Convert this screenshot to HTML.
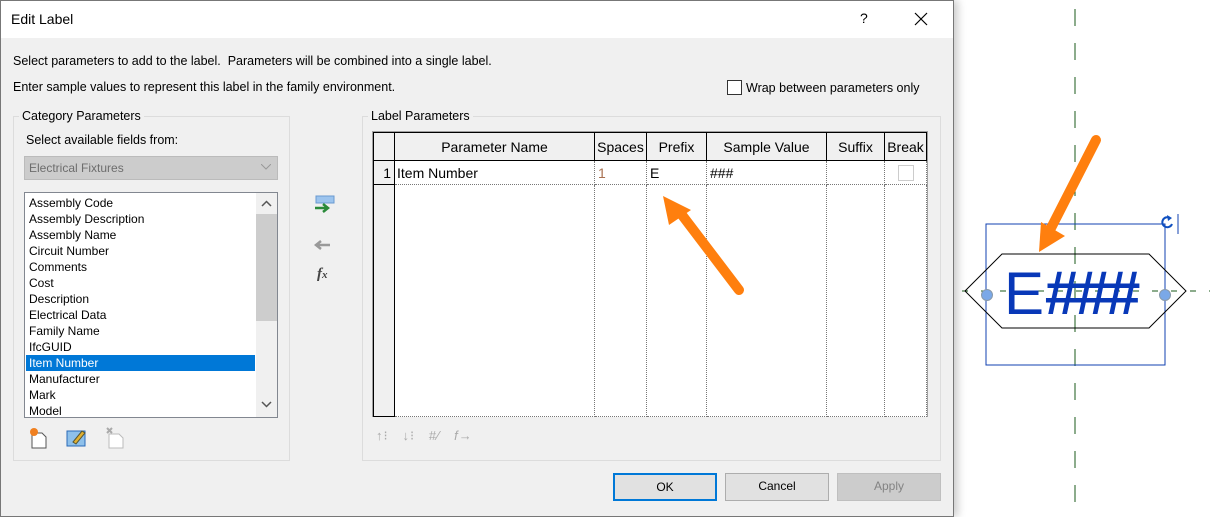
<!DOCTYPE html>
<html><head><style>
*{margin:0;padding:0;box-sizing:border-box}
body{width:1210px;height:517px;background:#fff;position:relative;overflow:hidden;font-family:"Liberation Sans",sans-serif;font-size:12px;color:#000}
.a{position:absolute}
.dlg{left:0;top:0;width:954px;height:517px;background:#f0f0f0;border:1px solid #777;box-shadow:4px 0 8px rgba(0,0,0,.2)}
.title{left:1px;top:1px;width:952px;height:37px;background:#fff}
.grp{border:1px solid #dcdcdc}
.lg{background:#f0f0f0;padding:0 3px}
.li{position:absolute;left:4px;height:16px;line-height:16px;font-size:12px}
.btn{border:1px solid #adadad;background:#e1e1e1;text-align:center;line-height:25px;height:28px;width:104px}
table{border-collapse:collapse}
.h td{border:1px solid #000;text-align:center}
</style></head><body>
<div class="a dlg"></div>
<div class="a title"></div>
<div class="a" style="left:11px;top:11px;font-size:14px">Edit Label</div>
<div class="a" style="left:860px;top:10px;font-size:14px">?</div>
<svg class="a" style="left:914px;top:12px" width="14" height="14"><path d="M1 1L13 13M13 1L1 13" stroke="#000" stroke-width="1.2"/></svg>
<div class="a" style="left:13px;top:54px;font-size:12.5px">Select parameters to add to the label.&nbsp; Parameters will be combined into a single label.</div>
<div class="a" style="left:13px;top:80px;font-size:12.5px">Enter sample values to represent this label in the family environment.</div>
<div class="a" style="left:727px;top:80px;width:15px;height:15px;border:1px solid #333;background:#fff"></div>
<div class="a" style="left:746px;top:81px;font-size:12.5px">Wrap between parameters only</div>

<div class="a grp" style="left:13px;top:116px;width:277px;height:345px"></div>
<div class="a lg" style="left:19px;top:109px;font-size:12.5px">Category Parameters</div>
<div class="a" style="left:26px;top:133px;font-size:12.5px">Select available fields from:</div>
<div class="a" style="left:24px;top:156px;width:254px;height:24px;background:#ccc;border:1px solid #bbb;color:#6d6d6d;line-height:22px;padding-left:4px">Electrical Fixtures</div>
<svg class="a" style="left:261px;top:164px" width="10" height="6"><path d="M0 0L5 5L10 0" fill="none" stroke="#999"/></svg>
<div class="a" style="left:24px;top:192px;width:254px;height:226px;background:#fff;border:1px solid #828790;overflow:hidden">
<div class="li" style="top:2px">Assembly Code</div>
<div class="li" style="top:18px">Assembly Description</div>
<div class="li" style="top:34px">Assembly Name</div>
<div class="li" style="top:50px">Circuit Number</div>
<div class="li" style="top:66px">Comments</div>
<div class="li" style="top:82px">Cost</div>
<div class="li" style="top:98px">Description</div>
<div class="li" style="top:114px">Electrical Data</div>
<div class="li" style="top:130px">Family Name</div>
<div class="li" style="top:146px">IfcGUID</div>
<div class="li" style="top:162px;left:1px;width:229px;background:#0078d7;color:#fff;padding-left:3px">Item Number</div>
<div class="li" style="top:178px">Manufacturer</div>
<div class="li" style="top:194px">Mark</div>
<div class="li" style="top:210px">Model</div>
<div class="a" style="left:231px;top:0;width:21px;height:224px;background:#f0f0f0"></div>
<div class="a" style="left:231px;top:21px;width:21px;height:107px;background:#cdcdcd"></div>
<svg class="a" style="left:236px;top:7px" width="11" height="7"><path d="M1 6L5.5 1.5L10 6" fill="none" stroke="#555" stroke-width="1.5"/></svg>
<svg class="a" style="left:236px;top:208px" width="11" height="7"><path d="M1 1L5.5 5.5L10 1" fill="none" stroke="#555" stroke-width="1.5"/></svg>
</div>
<svg class="a" style="left:28px;top:427px" width="22" height="22"><path d="M4 6h10l4 4v11H4z" fill="#fff" stroke="#555"/><circle cx="6" cy="5" r="4" fill="#f08020"/></svg>
<svg class="a" style="left:66px;top:428px" width="22" height="20"><rect x="1" y="3" width="18" height="15" fill="#8ec0ea" stroke="#2a6ab8"/><path d="M7 14L16 3l3 2-9 11z" fill="#e0b030" stroke="#553"/></svg>
<svg class="a" style="left:104px;top:427px" width="22" height="22"><path d="M5 7h10l4 4v10H5z" fill="#fff" stroke="#bbb"/><path d="M3 1l5 5M8 1L3 6" stroke="#aaa" stroke-width="2"/></svg>

<svg class="a" style="left:314px;top:195px" width="22" height="20"><rect x="2" y="1" width="18" height="7" fill="#9cc4ee" stroke="#6a9ad0"/><path d="M1 13h12M9 9l5 4-5 4" fill="none" stroke="#2a8a3a" stroke-width="2.5"/></svg>
<svg class="a" style="left:314px;top:240px" width="18" height="10"><path d="M16 5H4M7 1L2 5l5 4" fill="none" stroke="#999" stroke-width="2.5"/></svg>
<div class="a" style="left:317px;top:266px;font-family:'Liberation Serif',serif;font-style:italic;font-weight:bold;font-size:15px;color:#444">f<span style="font-size:11px">x</span></div>

<div class="a grp" style="left:362px;top:116px;width:579px;height:345px"></div>
<div class="a lg" style="left:368px;top:109px;font-size:12.5px">Label Parameters</div>
<div class="a" style="left:372px;top:131px;width:556px;height:286px;background:#fff;border:1px solid #a0a0a0"></div>
<table class="a" style="left:373px;top:132px;font-size:14px">
<tr class="h" style="height:28px;background:#f0f0f0">
<td style="width:21px"></td>
<td style="width:200px">Parameter Name</td>
<td style="width:52px">Spaces</td>
<td style="width:60px">Prefix</td>
<td style="width:120px">Sample Value</td>
<td style="width:58px">Suffix</td>
<td style="width:42px">Break</td>
</tr>
<tr style="height:24px;background:#fff">
<td style="border:1px solid #000;background:#f0f0f0;text-align:right;padding-right:3px">1</td>
<td style="border:1px dotted #777;border-top:1px solid #000;padding-left:2px">Item Number</td>
<td style="border:1px dotted #777;border-top:1px solid #000;padding-left:3px;color:#a87050">1</td>
<td style="border:1px dotted #777;border-top:1px solid #000;padding-left:3px">E</td>
<td style="border:1px dotted #777;border-top:1px solid #000;padding-left:3px">###</td>
<td style="border:1px dotted #777;border-top:1px solid #000"></td>
<td style="border:1px dotted #777;border-top:1px solid #000"><div style="margin:0 auto;width:16px;height:16px;border:1px solid #ccc"></div></td>
</tr>
<tr style="height:232px;background:#fff">
<td style="border:1px solid #000;background:#f0f0f0"></td>
<td style="border:1px dotted #777"></td><td style="border:1px dotted #777"></td><td style="border:1px dotted #777"></td><td style="border:1px dotted #777"></td><td style="border:1px dotted #777"></td><td style="border:1px dotted #777"></td>
</tr>
</table>
<div class="a" style="left:376px;top:428px;color:#aaa;font-size:13px;letter-spacing:1px">↑⁝&nbsp;&nbsp;&nbsp;↓⁝&nbsp;&nbsp;&nbsp;#⁄&nbsp;&nbsp;&nbsp;<i>f</i>→</div>

<div class="a btn" style="left:613px;top:473px;border:2px solid #0078d7;line-height:24px">OK</div>
<div class="a btn" style="left:725px;top:473px">Cancel</div>
<div class="a btn" style="left:837px;top:473px;background:#ccc;border-color:#bfbfbf;color:#838383">Apply</div>

<svg class="a" style="left:954px;top:0" width="256" height="517">
<line x1="121" y1="9" x2="121" y2="517" stroke="#1a5a1a" stroke-width="1" stroke-dasharray="17 17"/>
<line x1="8" y1="291" x2="256" y2="291" stroke="#1a5a1a" stroke-width="1" stroke-dasharray="6 13"/>
<rect x="32" y="224" width="179" height="141" fill="none" stroke="#1040b0" stroke-width="1"/>
<path d="M11 291L48 254H195L232 291L195 328H48Z" fill="none" stroke="#000" stroke-width="1"/>
<text x="50" y="314" font-family="Liberation Sans,sans-serif" font-size="60" fill="#0838b8">E</text>
<text x="90" y="314" font-family="Liberation Sans,sans-serif" font-size="62" fill="#0838b8" font-weight="bold" font-style="italic" letter-spacing="-4">###</text>
<circle cx="33" cy="295" r="5.5" fill="#7aa8e8" stroke="#8899aa"/>
<circle cx="211" cy="295" r="5.5" fill="#7aa8e8" stroke="#8899aa"/>
<path d="M216 218a5 5 0 1 0 2 6" fill="none" stroke="#1050c0" stroke-width="2"/><path d="M213 215l5 3-4 3" fill="#1050c0"/>
<line x1="224" y1="214" x2="224" y2="234" stroke="#1040b0"/>
<path d="M142 140L95 232" stroke="#ff7f0e" stroke-width="10" stroke-linecap="round"/>
<path d="M85 252L87 222L111 236Z" fill="#ff7f0e"/>
</svg>
<svg class="a" style="left:655px;top:185px" width="100" height="120">
<path d="M84 105L27 30" stroke="#ff7f0e" stroke-width="10" stroke-linecap="round"/>
<path d="M8 11L36 25L14 40Z" fill="#ff7f0e"/>
</svg>
</body></html>
